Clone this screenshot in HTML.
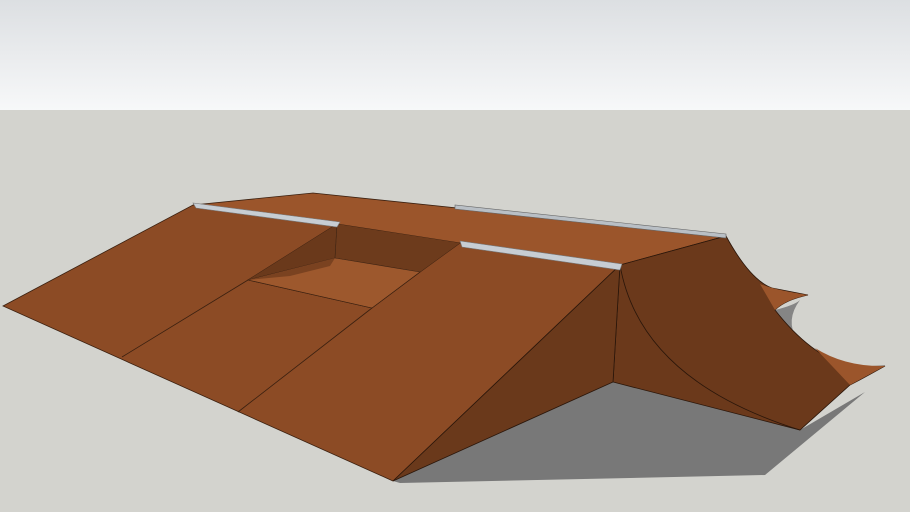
<!DOCTYPE html>
<html><head><style>html,body{margin:0;padding:0;width:910px;height:512px;overflow:hidden}</style></head>
<body>
<svg width="910" height="512" viewBox="0 0 910 512" xmlns="http://www.w3.org/2000/svg">
<defs><linearGradient id="sky" x1="0" y1="0" x2="0" y2="1"><stop offset="0" stop-color="#dcdfe2"/><stop offset="1" stop-color="#f7f8f9"/></linearGradient></defs>
<rect width="910" height="110" fill="url(#sky)"/>
<rect y="110" width="910" height="402" fill="#d3d3ce"/>
<!-- shadow -->
<polygon points="393,481 613,382 800,430 865,392 765,475 400,483" fill="#787878"/>
<path d="M775,310 Q795,305 800,300 Q785,320 797,340 Z" fill="#858585"/>
<!-- top deck -->
<polygon points="193,205 313,193 726,236 620,265 460,243 337,224" fill="#9b552b" stroke="#3a2010" stroke-width="0.8"/>
<!-- slopes -->
<polygon points="3,306 193,205 337,224 248,280 372,308 420,272 460,243 620,265 393,481" fill="#8c4b25" stroke="#3a2010" stroke-width="0.8"/>
<!-- pit walls -->
<polygon points="337,224 460,243 420,272 335,258" fill="#6d3b1c"/>
<polygon points="337,224 335,258 248,280" fill="#6a391b"/>
<polygon points="248,280 335,258 420,272 372,308" fill="#9d582d" stroke="#3a2010" stroke-width="0.6"/>
<polygon points="248,280 335,258 330,266 290,276" fill="#7a4220"/>
<line x1="122" y1="357" x2="248" y2="280" stroke="#3a2010" stroke-width="0.8"/>
<line x1="238" y1="412" x2="372" y2="308" stroke="#3a2010" stroke-width="0.8"/>
<line x1="337" y1="224" x2="335" y2="258" stroke="#3a2010" stroke-width="0.6"/>
<!-- right side faces -->
<path d="M620,265 L726,236 Q750,280 772,288 L808,295 Q785,300 775,310 Q810,355 850,367 L885,366 Q860,380 850,385 L800,430 L613,382 Z" fill="#6b391b" stroke="#2a160a" stroke-width="0.8"/>
<path d="M760,284 Q775,290 808,295 Q785,300 775,310 Z" fill="#9b552b"/>
<path d="M815,348 Q845,367 885,366 L850,385 Z" fill="#9b552b"/>
<polygon points="620,265 613,382 393,481" fill="#6a391b" stroke="#2a160a" stroke-width="0.8"/>
<path d="M620,265 Q640,380 800,430" fill="none" stroke="#2a160a" stroke-width="0.8"/>
<!-- rails -->
<polygon points="193,203 196,208 337,227 340,222" fill="#c7cdd3" stroke="#777" stroke-width="0.6"/>
<polygon points="460,241 462,247 620,270 622,264" fill="#c7cdd3" stroke="#777" stroke-width="0.6"/>
<polygon points="455,205 455,209 726,238 726,234" fill="#b9bfc5" stroke="#666" stroke-width="0.6"/>
</svg>
</body></html>
